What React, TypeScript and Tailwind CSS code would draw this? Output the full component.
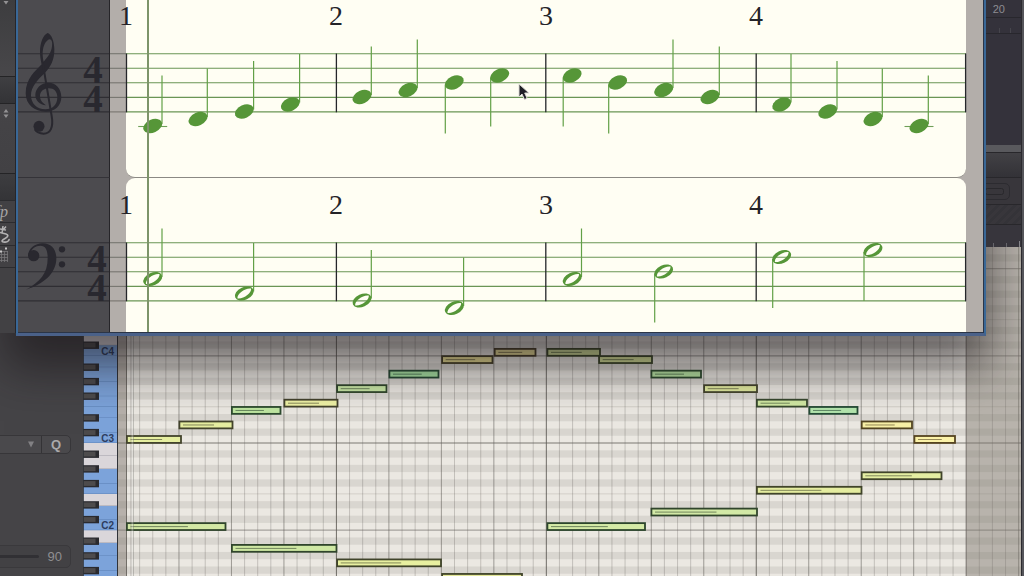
import React from "react";

type Note = { x: number; y: number; down?: boolean; ledger?: boolean };

const TREBLE: Note[] = [
  { x: 26.7, y: 126, ledger: true },
  { x: 72, y: 119 },
  { x: 118.3, y: 111.5 },
  { x: 164.3, y: 104.5 },
  { x: 236, y: 97 },
  { x: 282, y: 90 },
  { x: 328.3, y: 82.5, down: true },
  { x: 373.7, y: 75.5, down: true },
  { x: 446.2, y: 75.5, down: true },
  { x: 491.7, y: 82.5, down: true },
  { x: 537.7, y: 90 },
  { x: 584, y: 97 },
  { x: 655.7, y: 104.5 },
  { x: 701.7, y: 111.5 },
  { x: 747, y: 119 },
  { x: 793, y: 126, ledger: true },
];

const BASS: Note[] = [
  { x: 26.7, y: 90 },
  { x: 118.3, y: 104.5 },
  { x: 236, y: 111.5 },
  { x: 328.3, y: 119 },
  { x: 446.2, y: 90 },
  { x: 537.7, y: 82.5, down: true },
  { x: 655.7, y: 68, down: true },
  { x: 747, y: 61, down: true },
];

const STAFF_LINES = [53.7, 68.3, 82.8, 97.4, 111.9];
const GREEN = "#569638";

function StaffNote({ note, hollow }: { note: Note; hollow: boolean }) {
  const stemX = note.down ? note.x - 9 : note.x + 9.3;
  const from = note.down ? note.y + 2 : note.y - 2;
  const to = note.down ? note.y + 51 : note.y - 50.5;
  return (
    <g>
      {note.ledger && (
        <path d={`M${note.x - 14.5} 126.5h29`} stroke="#6f9f58" strokeWidth="1.1" />
      )}
      <path d={`M${stemX} ${from}V${to}`} stroke="#62a046" strokeWidth="1.2" />
      <g transform={`translate(${note.x} ${note.y}) rotate(-24)`}>
        {hollow ? (
          <path
            fillRule="evenodd"
            fill={GREEN}
            d="M-9.9 0A9.9 6.4 0 1 0 9.9 0A9.9 6.4 0 1 0 -9.9 0ZM-8.2 1.8C-7.400 -2.600 3.500 -5 8.200 -1.800C7.400 2.600 -3.500 5 -8.200 1.800Z"
          />
        ) : (
          <ellipse rx="9.9" ry="6.5" fill={GREEN} />
        )}
      </g>
    </g>
  );
}

function Staff({ notes, hollow, height }: { notes: Note[]; hollow: boolean; height: number }) {
  return (
    <svg
      width="840"
      height={height}
      viewBox={`0 30 840 ${height}`}
      className="block shrink-0 overflow-visible"
      fill="none"
      aria-label="Staff"
    >
      {STAFF_LINES.map((y) => (
        <g key={y}>
          <path d={`M-16 ${y}H0`} stroke="#77756f" strokeWidth="1.1" />
          <path d={`M0 ${y}H840`} stroke="#6a9555" strokeWidth="1.1" />
        </g>
      ))}
      {[0.5, 210.4, 419.8, 630.2, 839.6].map((x) => (
        <path key={x} d={`M${x} 53.5V112.300`} stroke="#25262a" strokeWidth="1.3" />
      ))}
      {notes.map((n) => (
        <StaffNote key={n.x} note={n} hollow={hollow} />
      ))}
    </svg>
  );
}

function MeasureNumbers() {
  return (
    <div className="grid h-[30px] shrink-0 grid-cols-4 text-[28px] leading-[32px] text-[#242328]">
      {[1, 2, 3, 4].map((n) => (
        <span key={n} className="w-fit -translate-x-1/2">
          {n}
        </span>
      ))}
    </div>
  );
}

function TrebleClef() {
  return (
    <svg width="91" height="177" viewBox="18 0 91 177" className="block" fill="none" aria-label="Treble clef">
      {STAFF_LINES.map((y) => (
        <path key={y} d={`M18 ${y}H109`} stroke="#2f2e33" strokeWidth="1.1" />
      ))}
      <g transform="scale(.33333)">
        <path
          fillRule="evenodd"
          fill="#29282f"
          d="M143 99C130 104 120 128 120 155C120 168 122 180 125 193C107 212 77 236 77 280C77 314 104 335 137 335C166 335 184 316 184 291C184 265 167 248 146 248C122 248 106 266 106 285C106 301 119 314 138 316C127 308 120 300 120 288C120 274 132 265 147 265C162 265 172 275 172 292C172 314 158 328 136 328C110 328 93 310 93 286C93 260 112 241 134 219C152 201 164 178 163 146C162 122 155 104 143 99ZM149 118C155 118 158 127 156 139C154 157 144 171 131 185C128 174 127 160 129 148C132 132 141 119 149 118Z"
        />
        <path d="M128 188L155 348C161 382 151 401 131 401C119 401 109 396 104 388" stroke="#29282f" strokeWidth="6" />
        <circle cx="117" cy="379" r="16.5" fill="#29282f" />
      </g>
      <g fill="#29282f" fontSize="39" fontWeight="700" textAnchor="middle">
        <text x="93" y="83">4</text>
        <text x="93" y="112">4</text>
      </g>
    </svg>
  );
}

function BassClef() {
  return (
    <svg width="91" height="154" viewBox="18 178 91 154" className="block" fill="none" aria-label="Bass clef">
      {STAFF_LINES.map((y) => (
        <path key={y} d={`M18 ${y + 189}H109`} stroke="#2f2e33" strokeWidth="1.1" />
      ))}
      <g transform="translate(0 180) scale(.33333)" fill="#29282f">
        <path d="M84 229C84 205 105 190 128 190C154 190 169 208 169 235C169 282 128 314 78 329C120 306 143 280 143 235C143 212 138 197 121 197C106 197 95 206 92 218Z" />
        <circle cx="101" cy="227" r="17" />
        <circle cx="186" cy="208" r="9.5" />
        <circle cx="186" cy="253" r="9.5" />
      </g>
      <g fill="#29282f" fontSize="39" fontWeight="700" textAnchor="middle">
        <text x="97" y="272">4</text>
        <text x="97" y="301">4</text>
      </g>
    </svg>
  );
}

function ScoreWindow() {
  return (
    <section
      aria-label="Score"
      className="absolute top-0 right-[38px] left-4 z-20 flex flex-col overflow-hidden border-x-2 border-b-[3px] border-x-[#3a6897] border-b-[#4a6189] font-['Liberation_Serif',serif]"
    >
      <div className="relative flex flex-col border-r border-b border-[#2b3547] bg-[#b3aeaa]">
        <div className="flex h-[178px]">
          <div className="w-[92px] shrink-0 border-r border-b border-r-[#262529] border-b-[#343338] bg-[#4c4b4f]">
            <TrebleClef />
          </div>
          <div className="mr-[17px] ml-4 flex min-w-0 flex-1 flex-col rounded-b-[9px] border-b border-[#8b8983] bg-[#fffef3]">
            <MeasureNumbers />
            <Staff notes={TREBLE} hollow={false} height={147} />
          </div>
        </div>
        <div className="flex h-[154px]">
          <div className="w-[92px] shrink-0 border-r border-[#262529] bg-[#4c4b4f]">
            <BassClef />
          </div>
          <div className="mr-[17px] ml-4 flex min-w-0 flex-1 flex-col rounded-t-[9px] bg-[#fffef3] pt-[11px]">
            <MeasureNumbers />
            <Staff notes={BASS} hollow height={113} />
          </div>
        </div>
        <div className="absolute inset-y-0 left-[129px] w-[2px] bg-[#7d9469]" />
      </div>
    </section>
  );
}

const SEMI = 7.26;
const C3_TOP = 435.8;
const ROLL_NOTES: [number, number, number, string, string][] = [
  [126.5, 181, 0, "#e6efa0", "#43442c"],
  [179, 232.5, 2, "#e6eea0", "#43442c"],
  [231.5, 280.5, 4, "#bfe6a2", "#2c4a2e"],
  [284, 337.5, 5, "#f0f3a6", "#43422c"],
  [336.7, 386.5, 7, "#c9e8a6", "#30472c"],
  [389, 438.5, 9, "#a8e4a4", "#264a34"],
  [441.7, 492.5, 11, "#e8dd92", "#453f26"],
  [494.3, 535.5, 12, "#e8dc94", "#453c26"],
  [547, 600, 12, "#cfdc96", "#384426"],
  [598.7, 652, 11, "#d2de96", "#384426"],
  [651, 701, 9, "#b8e6a4", "#2c4a2e"],
  [703.7, 757, 7, "#e2eb9f", "#43442c"],
  [756.5, 807, 5, "#d2eaa4", "#37482e"],
  [809, 857.5, 4, "#b4e6ae", "#244b35"],
  [861.3, 912, 2, "#f8f0a6", "#524422"],
  [914, 955, 0, "#fbf2a8", "#564420"],
  [126.5, 225.5, -12, "#d2e8a4", "#30452c"],
  [231.5, 336.5, -15, "#cfe8a4", "#30452c"],
  [336.7, 441, -17, "#e8f0a0", "#40442a"],
  [441.7, 522, -19, "#e2e698", "#40442a"],
  [547, 645, -12, "#d4eaa6", "#2c452c"],
  [651, 757, -10, "#d2e9a6", "#30452c"],
  [756.5, 861.5, -7, "#e4ec9f", "#40442a"],
  [861.3, 941.5, -5, "#e4eea2", "#40442a"],
];

function PianoRoll() {
  const semitones = Array.from({ length: 48 }, (_, i) => 27 - i);
  const columns = Array.from({ length: 72 }, (_, i) => i);
  return (
    <svg
      viewBox="118 247 903 329"
      preserveAspectRatio="xMinYMin slice"
      className="block min-h-0 w-full flex-1"
      aria-label="Piano roll"
    >
      <rect x="118" y="247" width="2000" height="900" fill="#ebe8e2" />
      {semitones
        .filter((s) => [1, 3, 6, 8, 10].includes((s + 36) % 12))
        .map((s) => (
          <rect key={s} x="118" y={C3_TOP - s * SEMI} width="2000" height={SEMI} fill="#d9d6d0" />
        ))}
      {semitones
        .filter((s) => (s + 36) % 12 === 5)
        .map((s) => (
          <path key={s} d={`M118 ${C3_TOP + SEMI - s * SEMI}h2000`} stroke="#cbc8c2" strokeWidth=".8" />
        ))}
      {columns.map((i) => (
        <path
          key={i}
          d={`M${126.5 + i * 13.12} 247v900`}
          stroke="#504d48"
          strokeOpacity={i % 16 === 0 ? 0.8 : i % 4 === 0 ? 0.5 : 0.26}
          strokeWidth="1"
        />
      ))}
      {[268.6, 355.8, 443, 530.1].map((y) => (
        <path
          key={y}
          d={`M118 ${y}h2000`}
          stroke="#5f5c58"
          strokeOpacity={y === 443 ? 0.8 : 0.5}
          strokeWidth="1.2"
        />
      ))}
      <rect x="118" y="247" width="8.5" height="900" fill="#7d766e" fillOpacity=".48" />
      <rect x="966.3" y="247" width="1200" height="900" fill="#7d766e" fillOpacity=".46" />
      {ROLL_NOTES.map(([x1, x2, s, fill, edge]) => {
        const y = C3_TOP - s * SEMI;
        return (
          <g key={`${x1}:${s}`}>
            <rect x={x1 + 0.4} y={y + 0.2} width={x2 - x1 - 0.4} height="6.9" fill={fill} stroke={edge} strokeWidth="1.8" />
            <path d={`M${x1 + 4} ${y + 3.7}H${x1 + 4 + (x2 - x1) * 0.58}`} stroke={edge} strokeOpacity=".6" strokeWidth="1" />
          </g>
        );
      })}
      <path d="M131 247v900M133.3 247v900" stroke="#77746f" strokeOpacity=".6" strokeWidth=".8" />
      <path d="M132.2 247v900" stroke="#fff" strokeOpacity=".45" strokeWidth="1" />
    </svg>
  );
}

const WHITE_KEYS: [number, number, boolean][] = [
  [333, 345.3, false],
  [345.3, 355.8, true],
  [355.8, 367.3, true],
  [367.3, 381.7, true],
  [381.7, 396.3, true],
  [396.3, 406.7, true],
  [406.7, 418, true],
  [418, 432.7, true],
  [432.7, 443, true],
  [443, 456, false],
  [456, 469, false],
  [469, 483.7, true],
  [483.7, 494, true],
  [494, 506, false],
  [506, 519.7, true],
  [519.7, 530.3, true],
  [530.3, 543, false],
  [543, 556, true],
  [556, 570.7, true],
  [570.7, 585, true],
];
const BLACK_KEYS = [345.3, 367.3, 381.7, 396.3, 418, 432.7, 454.3, 469, 483.7, 505, 519.7, 541.3, 556, 570.7];

function Keyboard() {
  return (
    <svg
      viewBox="83 333 35 243"
      preserveAspectRatio="xMinYMin slice"
      className="h-full w-[35px] shrink-0 bg-[#7ca2d8]"
      aria-label="Keyboard"
    >
      {WHITE_KEYS.map(([top, bottom, lit]) => (
        <g key={top}>
          <rect x="83" y={top} width="34.5" height={bottom - top} fill={lit ? "#7ca3da" : "#dad6da"} />
          <path d={`M83 ${bottom}h34`} stroke={lit ? "#5c7fb4" : "#9b98a4"} strokeWidth=".9" />
        </g>
      ))}
      {BLACK_KEYS.map((y) => (
        <g key={y}>
          <rect x="82" y={y - 3.8} width="17" height="7.4" fill="#2a2a2e" />
          <rect x="82" y={y - 2.6} width="13.5" height="4.8" fill="#4d4b4c" />
        </g>
      ))}
      <path d="M83.3 333v243M117.5 333v243" stroke="#2f3238" strokeWidth="1" />
      <g
        fill="#2d3d60"
        fontFamily="Liberation Sans, sans-serif"
        fontSize="10"
        fontWeight="700"
        textAnchor="end"
      >
        <text x="114" y="355">C4</text>
        <text x="114" y="442">C3</text>
        <text x="114" y="529">C2</text>
      </g>
    </svg>
  );
}

function ToolStrip() {
  return (
    <div className="relative z-10 flex h-[333px] w-4 shrink-0 flex-col border-r border-[#26262a] bg-[#424144] text-[#a6a5a6]">
      <div className="h-[77px] border-b border-[#242426] bg-linear-to-b from-[#3d3d3f] to-[#48474a]">
        <svg width="12" height="6" viewBox="0 0 12 6" className="block">
          <path d="M3.500 1h5L6 4.500z" fill="#929193" />
        </svg>
      </div>
      <div className="h-[27px] border-b border-[#242426] bg-linear-to-b from-[#3f3f42] to-[#333336]" />
      <div className="h-[70px] border-b border-[#242426] bg-linear-to-b from-[#454447] to-[#424144] pt-1">
        <svg width="12" height="12" viewBox="0 0 12 12" className="block">
          <path d="M6 1l2.500 3.500h-5zM6 10l2.500-3.500h-5z" fill="#929193" />
        </svg>
      </div>
      <div className="h-[27px] border-b border-[#2c2c2f] bg-linear-to-b from-[#3d3d40] to-[#343437]" />
      <button
        type="button"
        className="flex h-[22px] items-center justify-end border-b border-[#2c2c2f] pr-[7px] font-['Liberation_Serif',serif] text-[16px] leading-[20px] italic"
      >
        fp
      </button>
      <button type="button" aria-label="Rests" className="h-[23px] border-b border-[#2c2c2f]">
        <svg width="14" height="22" viewBox="0 0 14 22" className="block" fill="none" stroke="#b4b3b4">
          <path d="M0 6l6 1M3 3l-1 7M6 3.500L3 7" strokeWidth="1.500" />
          <path d="M0 9.500l6 1.500c3 1 2 3-1 4.500s-4 3-1.500 3.500 6-.500 5.500-3" strokeWidth="1.600" />
        </svg>
      </button>
      <button type="button" aria-label="Step grid" className="h-[22px] border-b border-[#2c2c2f]">
        <svg width="12" height="21" viewBox="0 0 12 21" className="block" fill="none">
          <path d="M0 5.500h8M0 8.500h8M0 11.500h8M0 14.500h8M1.500 5v11M4.500 5v11M7.500 5v11" stroke="#777678" strokeWidth=".8" />
          <path d="M0 5.500h2M5 2.500h2" stroke="#c8c7c8" strokeWidth="2" />
        </svg>
      </button>
    </div>
  );
}

function Inspector() {
  return (
    <aside className="flex h-full w-[83px] shrink-0 flex-col overflow-hidden bg-[#454447] pt-[102px] text-[#aaa9ab]">
      <div className="-ml-2 flex h-[19px] w-[79px] rounded-[5px] border border-[#373639] bg-[#4a494c]">
        <button type="button" aria-label="Quantize value" className="flex flex-1 items-center justify-end border-r border-[#343336] pr-1.5">
          <svg width="8" height="7" viewBox="0 0 8 7" className="block">
            <path d="M1 .5h6L4 6.500z" fill="#828184" />
          </svg>
        </button>
        <button type="button" className="w-7 text-center text-[13px] leading-[17px] font-bold">
          Q
        </button>
      </div>
      <label className="mt-[91px] -ml-2 flex h-[23px] w-[79px] shrink-0 items-center rounded-[5px] border border-[#3a393c] bg-[#424144] pr-2">
        <input
          type="range"
          aria-label="Velocity"
          defaultValue={0}
          className="h-[3px] w-[46px] appearance-none rounded-full bg-[#313034] [&::-webkit-slider-thumb]:appearance-none"
        />
        <span className="flex-1 text-right text-[13px] leading-[20px] text-[#8f8e91]">90</span>
      </label>
    </aside>
  );
}

function EditorHeader() {
  return (
    <div className="relative z-10 flex h-[247px] shrink-0 flex-col bg-[#3a393e]">
      <div className="flex h-[145px] flex-col items-end rounded-br-[3px] bg-[#34323b]">
        <div className="h-[18px] w-full border-b border-[#28272d] pr-4 text-right text-[11px] leading-[18px] text-[#8d8c92]">
          20
        </div>
        <div className="flex h-4 w-full items-end justify-end gap-[10px] border-b border-[#28272d] pr-[10px]">
          <span className="h-[5px] w-px bg-[#46454c]" />
          <span className="h-[5px] w-px bg-[#46454c]" />
        </div>
      </div>
      <div className="h-[7px] bg-[#59595d]" />
      <div className="h-[26px] border-t border-b border-[#28272b] bg-linear-to-b from-[#424145] to-[#333237]" />
      <div className="flex h-[27px] items-center justify-end border-b border-[#28272b] bg-[#38363b] pr-[11px]">
        <button type="button" aria-label="Link" className="flex h-[17px] w-11 items-center justify-end rounded-[5px] border border-[#2c2b30] pr-1">
          <svg width="20" height="7" viewBox="0 0 20 7" fill="none" className="block">
            <rect x=".5" y=".5" width="18" height="6" rx="2" stroke="#29282c" />
          </svg>
        </button>
      </div>
      <div className="h-[20px] border-b border-[#28272b] bg-[repeating-linear-gradient(135deg,#38363b_0px,#38363b_3px,#343338_3px,#343338_6px)]" />
      <div className="flex flex-1 items-end justify-end gap-3 bg-[#37353c] pr-px">
        <span className="h-1 w-px bg-[#66656b]" />
        <span className="h-1 w-px bg-[#66656b]" />
        <span className="h-1.5 w-px bg-[#85848a]" />
      </div>
    </div>
  );
}

export default function App() {
  return (
    <main className="relative flex h-screen min-h-[576px] overflow-hidden bg-[#454447] font-['Liberation_Sans',sans-serif]">
      <div className="flex w-[118px] shrink-0 flex-col">
        <ToolStrip />
        <div className="flex min-h-0 flex-1">
          <Inspector />
          <Keyboard />
        </div>
      </div>
      <div className="flex min-w-0 flex-1 flex-col">
        <EditorHeader />
        <PianoRoll />
      </div>
      <div className="relative z-10 w-[3px] shrink-0 border-l border-[#2c2b30] bg-[#55555a]" />
      <div className="pointer-events-none absolute top-0 right-[46px] left-4 h-[336px] shadow-[0_20px_44px_12px_rgba(24,18,22,0.6)]" />
      <ScoreWindow />
      <svg width="12" height="18" viewBox="0 0 12 18" className="absolute top-[83px] left-[518px] z-30">
        <path
          d="M1 1v13l3-3 2.500 5.500 2.600-1.200L6.700 10H11z"
          fill="#1f1f26"
          stroke="#deddd6"
          strokeWidth="1"
          strokeLinejoin="round"
        />
      </svg>
    </main>
  );
}
